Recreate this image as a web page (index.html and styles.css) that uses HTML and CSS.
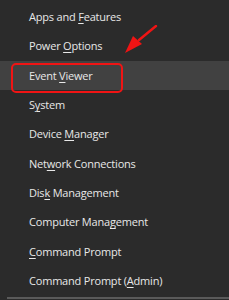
FILE: index.html
```html
<!DOCTYPE html>
<html>
<head>
<meta charset="utf-8">
<link rel="stylesheet" href="styles.css">
</head>
<body>
<ul class="menu">
  <li class="item"><span class="label">Apps and <u>F</u>eatures</span></li>
  <li class="item"><span class="label">Power <u>O</u>ptions</span></li>
  <li class="item active"><span class="label">Event <u>V</u>iewer</span></li>
  <li class="item"><span class="label">S<u>y</u>stem</span></li>
  <li class="item"><span class="label">Device <u>M</u>anager</span></li>
  <li class="item"><span class="label">Net<u>w</u>ork Connections</span></li>
  <li class="item"><span class="label">Dis<u>k</u> Management</span></li>
  <li class="item"><span class="label">Computer Mana<u>g</u>ement</span></li>
  <li class="item"><span class="label"><u>C</u>ommand Prompt</span></li>
  <li class="item"><span class="label">Command Prompt (<u>A</u>dmin)</span></li>
</ul>
<div class="separator"></div>
<svg class="arrow" width="40" height="36" viewBox="0 0 40 36">
  <line x1="31" y1="1" x2="14" y2="15" stroke="#f01414" stroke-width="2.4" stroke-linecap="round"/>
  <polygon points="0,28 8,11 17,19" fill="#f01414"/>
</svg>
</body>
</html>
```
FILE: styles.css
```css
html, body {
  margin: 0;
  padding: 0;
  background: #2b2b2b;
  height: 300px;
  overflow: hidden;
}
body {
  position: relative;
  font-family: "Open Sans", "Noto Sans", sans-serif;
  font-size: 11px;
  letter-spacing: -0.2px;
  color: #e8e8e8;
}
.menu {
  list-style: none;
  margin: 0;
  padding: 2px 0 0 0;
}
.item {
  height: 29.33px;
  display: flex;
  align-items: center;
  padding-left: 29px;
  white-space: nowrap;
}
.label {
  white-space: pre;
}
.label u {
  text-decoration-thickness: 1px;
  text-underline-offset: 2px;
}
.active {
  background: #414141;
  position: relative;
}
.active::after {
  content: "";
  position: absolute;
  left: 11px;
  top: 2px;
  width: 108px;
  height: 26px;
  border: 2px solid #f01414;
  border-radius: 5px;
}
.separator {
  margin: 2px 0 0 7px;
  height: 2px;
  background: #5a5a5a;
}
.arrow {
  position: absolute;
  left: 125px;
  top: 25px;
}
```
